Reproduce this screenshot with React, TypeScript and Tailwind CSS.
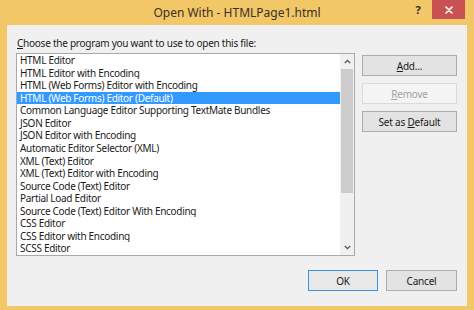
import React from "react";

const items = [
  "HTML Editor",
  "HTML Editor with Encoding",
  "HTML (Web Forms) Editor with Encoding",
  "HTML (Web Forms) Editor (Default)",
  "Common Language Editor Supporting TextMate Bundles",
  "JSON Editor",
  "JSON Editor with Encoding",
  "Automatic Editor Selector (XML)",
  "XML (Text) Editor",
  "XML (Text) Editor with Encoding",
  "Source Code (Text) Editor",
  "Partial Load Editor",
  "Source Code (Text) Editor With Encoding",
  "CSS Editor",
  "CSS Editor with Encoding",
  "SCSS Editor",
];

const font = { fontFamily: '"Noto Sans", "Open Sans", sans-serif' };

function Btn({
  children,
  disabled,
  primary,
  className = "",
}: {
  children: React.ReactNode;
  disabled?: boolean;
  primary?: boolean;
  className?: string;
}) {
  const base =
    "flex items-center justify-center h-[21px] text-[10px] leading-none tracking-[-0.2px] border ";
  const look = disabled
    ? "border-[#dadada] bg-[#f4f4f4] text-[#a3a3a3]"
    : primary
    ? "border-[#3c94e0] bg-[#e8e8e8] text-[#1a1a1a]"
    : "border-[#adadad] bg-[#e3e3e3] text-[#1a1a1a]";
  return <div className={base + look + " " + className}>{children}</div>;
}

export default function App() {
  return (
    <div
      className="w-[474px] h-[310px] bg-[#f2c768] flex flex-col overflow-hidden"
      style={font}
    >
      {/* title bar */}
      <div className="h-[25px] grid grid-cols-[80px_1fr_80px] items-start">
        <div />
        <div className="pt-[4px] text-center text-[12px] leading-[18px] text-[#3a3122]">
          Open With - HTMLPage1.html
        </div>
        <div className="flex justify-end pr-[9px]">
          <div className="w-[12px] mt-[3px] mr-[8px] text-[11px] font-bold leading-[14px] text-[#2b2b2b] text-center">
            ?
          </div>
          <div className="w-[33px] h-[19px] bg-[#c85251] flex items-center justify-center">
            <svg width="8" height="8" viewBox="0 0 8 8">
              <path
                d="M1 1 L7 7 M7 1 L1 7"
                stroke="#fff"
                strokeWidth="1.6"
                strokeLinecap="round"
              />
            </svg>
          </div>
        </div>
      </div>

      {/* client area */}
      <div className="mx-[7px] mb-[4px] flex-1 bg-[#f0f0f0] flex flex-col">
        <div className="pl-[10px] pt-[12px] h-[28px] text-[10px] leading-[13px] tracking-[-0.25px] text-[#1a1a1a]">
          <span className="underline">C</span>hoose the program you want to use
          to open this file:
        </div>
        <div className="flex pl-[9px] pr-[10px]">
          <div className="w-[339px] h-[203px] border border-[#a9a9a9] bg-white flex">
            <div className="flex-1 flex flex-col">
              {items.map((it, i) => (
                <div
                  key={it}
                  className={
                    "h-[13px] pl-[3px] text-[10px] leading-[13px] tracking-[-0.3px] whitespace-nowrap overflow-hidden " +
                    (i === 3
                      ? "bg-[#3399ff] text-white"
                      : "text-[#1a1a1a]")
                  }
                >
                  {it}
                </div>
              ))}
            </div>
            <div className="w-[14px] bg-[#f0f0f0] flex flex-col items-center">
              <div className="h-[15px] flex items-center justify-center">
                <svg width="7" height="5" viewBox="0 0 7 5">
                  <path
                    d="M0.8 4 L3.5 1.3 L6.2 4"
                    stroke="#555"
                    strokeWidth="1.3"
                    fill="none"
                  />
                </svg>
              </div>
              <div className="w-[12px] h-[124px] bg-[#cdcdcd]" />
              <div className="flex-1" />
              <div className="h-[15px] flex items-center justify-center">
                <svg width="7" height="5" viewBox="0 0 7 5">
                  <path
                    d="M0.8 1 L3.5 3.7 L6.2 1"
                    stroke="#555"
                    strokeWidth="1.3"
                    fill="none"
                  />
                </svg>
              </div>
            </div>
          </div>
          <div className="ml-[7px] flex-1 flex flex-col gap-[7px] pt-[2px]">
            <Btn>
              <span>
                <span className="underline">A</span>dd...
              </span>
            </Btn>
            <Btn disabled>
              <span>
                <span className="underline">R</span>emove
              </span>
            </Btn>
            <Btn>
              <span>
                Set as <span className="underline">D</span>efault
              </span>
            </Btn>
          </div>
        </div>
        <div className="flex-1" />
        <div className="flex justify-end gap-[8px] pr-[10px] pb-[15px]">
          <Btn primary className="w-[70px]">
            OK
          </Btn>
          <Btn className="w-[71px]">Cancel</Btn>
        </div>
      </div>
    </div>
  );
}
